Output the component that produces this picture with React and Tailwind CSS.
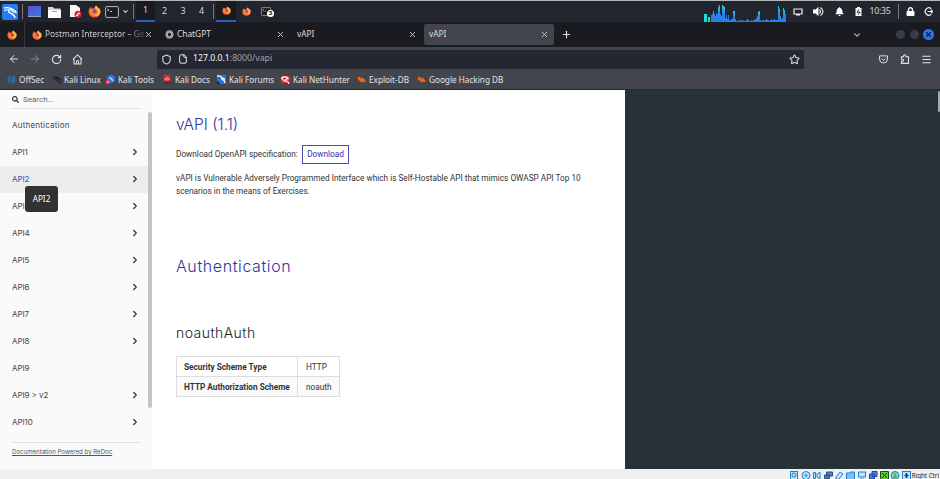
import {
  ArrowLeft,
  ArrowRight,
  RotateCw,
  ChevronDown,
  ChevronRight,
  Plus,
  Shield,
  File,
  Star,
  Menu,
  X,
} from "lucide-react";
import { FaLock, FaBell, FaSearch } from "react-icons/fa";

const tabs = [
  { title: "Postman Interceptor – Ge", icon: "firefox" },
  { title: "ChatGPT", icon: "gpt" },
  { title: "vAPI" },
  { title: "vAPI", active: true },
];

const bookmarks = [
  { name: "OffSec", icon: "offsec", width: "w-[45px]" },
  { name: "Kali Linux", icon: "dragon", width: "w-[54px]" },
  { name: "Kali Tools", icon: "tools", width: "w-[57px]" },
  { name: "Kali Docs", icon: "docs", width: "w-[54px]" },
  { name: "Kali Forums", icon: "forums", width: "w-[64px]" },
  { name: "Kali NetHunter", icon: "nethunter", width: "w-[76px]" },
  { name: "Exploit-DB", icon: "bug", width: "w-[60px]" },
  { name: "Google Hacking DB", icon: "bug", width: "w-[90px]" },
];

const menuItems = [
  { name: "Authentication" },
  { name: "API1", arrow: true },
  { name: "API2", arrow: true, active: true },
  { name: "API3", arrow: true },
  { name: "API4", arrow: true },
  { name: "API5", arrow: true },
  { name: "API6", arrow: true },
  { name: "API7", arrow: true },
  { name: "API8", arrow: true },
  { name: "API9" },
  { name: "API9 > v2", arrow: true },
  { name: "API10", arrow: true },
];

// cpu graph samples, in pixels
const cpu = [
  7, 8, 11, 8, 6, 9, 8, 15, 17, 8, 6, 17, 16, 15, 4, 7, 3, 7, 2, 2, 3, 3, 11, 11, 3, 1,
  1, 2, 1, 2, 2, 1, 2, 1, 1, 2, 3, 2, 1, 1, 2, 1, 2, 2, 3, 4, 6, 10, 11, 2, 1,
  2, 2, 1, 2, 3, 2, 2, 1, 2, 3, 2, 2, 3, 2, 2, 2, 16, 13, 6, 3, 4, 14, 12, 8,
];

const Firefox = ({ className }) => (
  <svg viewBox="0 0 24 24" className={className}>
    <path
      fill="#ff5a2c"
      d="M22.5 9c-.6-1.500-1.800-3-2.700-3.500.8 1.500 1 2.500 1.100 3.200C19.500 5 16.800 4 15 1c-2 1.200-2.800 3.500-2.800 4.800-1.200 0-2.400.4-3.300 1.100C8.700 6 8.800 5 9 4 7.600 4.600 6.500 5.600 5.800 6.500 5.200 6 5.100 4 5.200 3.200 3 4.600 1 8.500 1 12.500a11 10.800 0 0 0 22 0c0-1.200-.1-2.500-.5-3.500z"
    />
    <path fill="#ffbd2e" d="M15 1c-1.800 1.500-2.500 3.500-2.300 5.500 2 1 4.500 3 4.500 6.500 0 4-4 6.500-7.500 5 5 4.500 12 2 13-4.500.2-2 0-3.300-.2-4.500-.6-1.500-1.800-3-2.700-3.500.8 1.500 1 2.500 1.100 3.200C19.500 5 16.800 4 15 1z" />
    <circle cx="11.300" cy="12.500" r="4.600" fill="#8446d9" />
    <path fill="#ff9123" d="M4.500 8.500C7 8 10 8.500 12 10.200c-2.500-.3-2.800 1.300-4.500 1.300.5 4 4.500 5 8 2.800-.8 5-8 6.200-11 1.200-1.200-2-1-5 0-7z" />
  </svg>
);

const Dragon = ({ className }) => (
  <svg viewBox="0 0 16 16" className={className} fill="none" stroke="currentColor">
    <path strokeWidth="1.600" d="M1 3.500c4-1 7-.5 9.500 1.500C7.500 5 6 6.200 6.500 7.800 7.200 9.800 12 8.500 14 14.500" />
    <path strokeWidth="1.300" d="M1.500 6.500c2.500-1.200 4-1.300 6-.8M9.500 3.500l1 1.500 3.500 1.800 1 1.700-3-.5-2.500-2" />
  </svg>
);

const Gpt = ({ className }) => (
  <svg viewBox="0 0 16 16" className={className} fill="none" stroke="#b9bac0" strokeWidth="1.700">
    <ellipse cx="8" cy="8" rx="7" ry="3.800" />
    <ellipse cx="8" cy="8" rx="7" ry="3.800" transform="rotate(60 8 8)" />
    <ellipse cx="8" cy="8" rx="7" ry="3.800" transform="rotate(120 8 8)" />
  </svg>
);

const Terminal = ({ className }) => (
  <svg viewBox="0 0 14 12" className={className}>
    <rect x=".6" y=".6" width="12.800" height="10.800" rx="1" fill="#1b1c20" stroke="#b9b9b9" />
    <path d="M2.500 3l1.500 1-1.500 1M5 5.500h2" stroke="#fff" strokeWidth=".8" fill="none" />
  </svg>
);

const BookmarkIcon = ({ icon }) => {
  if (icon === "dragon") return <Dragon className="size-[10px] text-[#15161a]" />;
  return (
    <svg viewBox="0 0 10 10" className="size-[9px]">
      {icon === "offsec" && (
        <>
          <path d="M3.500 1C0 2 0 7.500 3 9V1zM4.300.500v7" fill="#1767c5" stroke="#2865c9" />
          <path d="M6.500 1C10 2 10 7.500 7 9V1zM5.700 2.500v7" fill="#5147ca" stroke="#138da5" />
        </>
      )}
      {icon === "tools" && (
        <>
          <circle cx="5.500" cy="4.500" r="4.500" fill="#2979e8" />
          <path d="M4 2.500l4 4" stroke="#bbdcff" strokeWidth="1.600" />
          <rect x="0" y="5.500" width="4.500" height="4.500" rx="1" fill="#e93b42" />
          <path d="M1 7.700h2.500" stroke="#ffd9d9" />
        </>
      )}
      {icon === "docs" && (
        <>
          <path d="M1 0h7v10H1z" fill="#e5262e" />
          <path d="M1 8h8v1.500H1z" fill="#22242b" />
          <path d="M3.200 3L2 4.300l1.200 1.300M5.800 3L7 4.300 5.800 5.600M5 2.500l-1 3.500" stroke="#fff" strokeWidth=".7" fill="none" />
        </>
      )}
      {icon === "forums" && (
        <>
          <path d="M0 0h10v10H0z" fill="#2174e6" />
          <path d="M0 1c4 0 6 1 5 3 1 2 4 1 4 5M6 3l3 2" stroke="#fff" strokeWidth="1.300" fill="none" />
          <path d="M0 6l4 4H0z" fill="#17243b" />
        </>
      )}
      {icon === "nethunter" && (
        <>
          <path d="M0 1h10v8H0z" fill="#e6202d" />
          <path d="M0 4c3-3 7-2 8 0L5 5c0 2 3 1 4 5M1 4l4 4" stroke="#fff" strokeWidth="1.300" fill="none" />
        </>
      )}
      {icon === "bug" && (
        <path d="M1 2l2 0 1 1 3 .3L9 5.500l.7 2-2 .2-3 .5-2-2-2-.7L1 4z" fill="#f0620f" />
      )}
    </svg>
  );
};

const Sep = ({ className }) => (
  <div className={`flex justify-center ${className}`}>
    <div className="h-[15px] w-px bg-[#77797e]" />
  </div>
);

const Panel = () => (
  <div className="flex h-[21px] shrink-0 items-center bg-[#23252e] text-[8.800px] text-[#d3d4d8]">
    <div className="flex w-5 justify-center">
      <div className="flex size-4 items-center justify-center rounded-[2px] bg-[#247bf3]">
        <Dragon className="size-[14px] text-white" />
      </div>
    </div>
    <Sep className="w-[5px]" />
    <div className="flex w-[19px] justify-center">
      <div className="h-[11px] w-[13px] border-b border-[#9aa0c8] bg-linear-to-br from-[#5a50c8] to-[#3477e8]" />
    </div>
    <div className="flex w-[21px] justify-center">
      <svg viewBox="0 0 13 12" className="h-3 w-[13px]">
        <path d="M0 1h5l1 1.500h6.500V12H0z" fill="#d9d9d9" />
        <path d="M0 4h13v8H0z" fill="#fbfbfb" />
        <path d="M4 5.500h5" stroke="#a4a4a4" />
      </svg>
    </div>
    <div className="flex w-5 justify-center">
      <svg viewBox="0 0 13 13" className="size-[13px]">
        <path d="M1 0h6l4 3v9H1z" fill="#f7f7f7" />
        <circle cx="9" cy="9.300" r="3.500" fill="#df2632" />
        <path d="M7.300 11l3.400-3.400" stroke="#fff" strokeWidth="1.300" />
      </svg>
    </div>
    <div className="flex w-[19px] justify-center">
      <Firefox className="size-[13px]" />
    </div>
    <div className="flex w-4 justify-center">
      <Terminal className="h-3 w-[14px]" />
    </div>
    <div className="flex w-[11px] justify-center">
      <ChevronDown className="size-[7px]" strokeWidth={3.5} />
    </div>
    <Sep className="w-[5px]" />
    <div className="flex h-full w-[19px] items-center justify-center border-b-2 border-[#2861c8] bg-[#191b21] pt-px">1</div>
    <div className="w-[19px] text-center">2</div>
    <div className="w-[18px] text-center">3</div>
    <div className="w-[19px] text-center">4</div>
    <Sep className="w-[5px]" />
    <div className="flex h-full w-5 items-center justify-center border-b-2 border-[#2861c8] bg-[#191b21]">
      <Firefox className="size-[9px]" />
    </div>
    <div className="flex w-5 justify-center">
      <Firefox className="size-[9px]" />
    </div>
    <div className="relative flex w-5 justify-center">
      <Terminal className="h-[9px] w-[10px]" />
      <div className="absolute top-[3px] left-[11px] flex size-[7px] items-center justify-center rounded-full bg-white text-[6px] font-bold text-black">
        3
      </div>
    </div>

    <div className="ml-auto flex h-[18px] w-[83px] items-end self-end">
      <div className="h-2 w-[3px] shrink-0 bg-[#18e0d8]" />
      <div className="mx-px h-[5px] w-[2px] shrink-0 bg-[#18e0d8]" />
      {cpu.map((h, i) => (
        <div
          key={i}
          className={
            h > 9
              ? "w-px bg-linear-to-t from-[#2a80e8] from-50% to-[#1ed8e0]"
              : "w-px bg-[#2a7fe6]"
          }
          style={{ height: h }}
        />
      ))}
    </div>
    <div className="flex w-[21px] justify-center">
      <svg viewBox="0 0 10 8" className="h-2 w-[10px]" fill="none" stroke="#eee" strokeWidth="1.200">
        <path d="M1 1h8v5H1zM3 7h4" />
      </svg>
    </div>
    <div className="flex w-[21px] justify-center">
      <svg viewBox="0 0 11 11" className="size-[11px]">
        <path d="M0 3.500h2.500L5.500.800v9.400l-3-2.700H0z" fill="#fff" />
        <path d="M6.500 3.500q2 2 0 4M7.500 1.500q5 4 0 8" stroke="#e8e8e8" strokeWidth="1.200" fill="none" />
      </svg>
    </div>
    <div className="flex w-5 justify-center">
      <FaBell className="size-[9px] text-white" />
    </div>
    <div className="flex w-[19px] justify-center">
      <svg viewBox="0 0 7 9" className="h-[9px] w-[7px]">
        <path d="M2 0h3v1h1.500v8h-6V1H2z" fill="#f5f5f5" />
        <path d="M4 2.500L2 5.300h3L3.200 7.700" stroke="#23252e" strokeWidth=".9" fill="none" />
      </svg>
    </div>
    <div className="w-[24px] text-center text-[8.800px] tracking-[-0.300px]">10:35</div>
    <Sep className="w-[12px]" />
    <div className="flex w-3 justify-center">
      <FaLock className="size-[9px] text-white" />
    </div>
    <div className="flex w-6 justify-center">
      <svg viewBox="0 0 10 10" className="ml-px size-[9px]" fill="none" stroke="#eee" strokeWidth="1.300">
        <path d="M8 2A4 4 0 1 0 8 8M4 5h5.500M7.500 3l2 2-2 2" />
      </svg>
    </div>
  </div>
);

const TabBar = () => (
  <div className="flex h-[25px] shrink-0 items-center bg-[#1a1b20] text-[8.350px] text-[#dcdde1]">
    <div className="flex h-full w-[25px] items-center justify-center border-r border-[#36373c]">
      <Firefox className="size-[10px]" />
    </div>
    <div className="ml-[3px] flex gap-[2px]">
      {tabs.map((tab, i) => (
        <div
          key={i}
          className={`flex h-[21px] w-[130px] items-center rounded-[2px] pr-[5px] pl-[5px] ${
            tab.active ? "bg-[#43454c]" : ""
          }`}
        >
          {tab.icon === "firefox" && <Firefox className="-ml-px mr-[3px] size-[10px] shrink-0" />}
          {tab.icon === "gpt" && <Gpt className="mr-[3px] size-[9px] shrink-0" />}
          <span
            className={`flex-1 whitespace-nowrap ${
              tab.icon === "firefox"
                ? "bg-linear-to-r from-[#dcdde1] from-82% to-[#44464c] bg-clip-text tracking-[-0.050px] text-transparent"
                : ""
            }`}
          >
            {tab.title}
          </span>
          <X className="size-[9px] shrink-0 text-[#c8c9cd]" strokeWidth={2.500} />
        </div>
      ))}
    </div>
    <Plus className="ml-[7px] size-[11px]" strokeWidth={2.500} />
    <ChevronDown className="mr-[34px] ml-auto size-[10px]" strokeWidth={2.500} />
    <div className="mr-[7px] flex gap-[5px]">
      <div className="size-[9px] rounded-full bg-[#383c49]" />
      <div className="size-[9px] rounded-full bg-[#383c49]" />
      <div className="-mx-px -my-px flex size-[11px] items-center justify-center rounded-full bg-[#2777f8]">
        <X className="size-[7px] text-[#14203a]" strokeWidth={5} />
      </div>
    </div>
  </div>
);

const NavBar = () => (
  <div className="flex h-[24px] shrink-0 items-center bg-[#43454c] text-[#e3e4e8]">
    <ArrowLeft className="ml-[8px] size-[12px]" strokeWidth={2} />
    <ArrowRight className="ml-[9px] size-[12px] text-[#8a8c92]" strokeWidth={2} />
    <RotateCw className="ml-[10px] size-[11px]" strokeWidth={2.400} />
    <svg viewBox="0 0 12 12" className="ml-[10px] size-[11px]" fill="none" stroke="currentColor" strokeWidth="1.100">
      <path d="M1 5.800L6 1l5 4.800M2.200 5v6h7.600V5M4.800 11V8.200a1.200 1.200 0 0 1 2.400 0V11" />
    </svg>
    <div className="ml-[74px] flex h-[19px] w-[647px] items-center rounded-[2px] bg-[#242731]">
      <Shield className="ml-[4px] size-[11px]" strokeWidth={2.200} />
      <File className="ml-[6px] size-[10px]" strokeWidth={2.400} />
      <span className="ml-[5px] text-[8.700px] text-[#a0a2ab]">
        <span className="text-[#f5f5f8]">127.0.0.1</span>:8000/vapi
      </span>
      <Star className="mr-[4px] ml-auto size-[11px]" strokeWidth={2.200} />
    </div>
    <svg viewBox="0 0 10 10" className="ml-[75px] size-[9px]" fill="none" stroke="currentColor" strokeWidth="1.100">
      <path d="M.6 1h8.800v3.500a4.400 4.400 0 0 1-8.800 0zM2.800 3.800L5 6l2.200-2.200" />
    </svg>
    <svg viewBox="0 0 10 10" className="ml-[12px] size-[10px]" fill="none" stroke="currentColor" strokeWidth="1.100">
      <path d="M3.500 2.800V2a1.200 1.200 0 0 1 2.400 0v.8h2.600v6.600H1.500V7.300h1a1 1 0 0 0 0-2.100h-1V2.800z" />
    </svg>
    <Menu className="ml-[11px] size-[11px]" strokeWidth={2.200} />
  </div>
);

const Bookmarks = () => (
  <div className="flex h-[19px] shrink-0 items-center border-b border-[#26272d] bg-[#43454c] pl-[6px] text-[8.200px] text-[#e3e4e8]">
    {bookmarks.map((b) => (
      <div key={b.name} className={`flex items-center whitespace-nowrap ${b.width}`}>
        <div className="mr-[2px] flex w-[11px] shrink-0 justify-center">
          <BookmarkIcon icon={b.icon} />
        </div>
        {b.name}
      </div>
    ))}
  </div>
);

const Sidebar = () => (
  <div className="relative flex w-[152px] shrink-0 flex-col bg-[#fafafa] font-[Inter,sans-serif] text-[8px] text-[#444]">
    <div className="mr-[11px] ml-[12px] flex h-[19px] items-center border-b border-[#e1e1e1] pt-px">
      <FaSearch className="size-[7px] text-[#222]" />
      <span className="ml-[4px] font-[Roboto,sans-serif] text-[8px] text-[#666]">Search...</span>
    </div>
    <div className="mt-[3px]">
      {menuItems.map((item) => (
        <div
          key={item.name}
          className={`flex h-[27px] items-center justify-between pr-[12px] pb-px pl-[12px] ${
            item.active ? "bg-[#ededed] text-[#4a45b5]" : ""
          }`}
        >
          <span className={item.name === "Authentication" ? "tracking-[0.200px]" : "tracking-[-0.080px]"}>
            {item.name}
          </span>
          {item.arrow && <ChevronRight className="size-[10px] text-[#333]" strokeWidth={3} />}
        </div>
      ))}
    </div>
    <div className="mt-[6px] mr-[11px] ml-[12px] border-t border-[#e1e1e1] pt-[4px] text-[6.100px] leading-[10px] text-[#555] underline">
      Documentation Powered by ReDoc
    </div>
    <div className="absolute top-[22px] right-0 h-[296px] w-[4px] rounded-full bg-[#c3c3c3]" />
    <div className="absolute top-[96px] left-[25px] flex h-[26px] w-[33px] items-center justify-center rounded-[3px] bg-[#2b2b2b]/97 font-['Noto_Sans',sans-serif] text-[8.200px] text-white">
      API2
    </div>
  </div>
);

const Main = () => (
  <div className="w-[473px] shrink-0 bg-white pl-6 font-[Roboto,sans-serif] text-[8.250px] text-[#333]">
    <h1 className="mt-[25px] font-[Inter,sans-serif] text-[15.500px] leading-5 font-light text-[#32329f]">
      vAPI (1.1)
    </h1>
    <div className="mt-[10px] flex h-[19px] items-center">
      <span className="w-[126px]">Download OpenAPI specification:</span>
      <span className="flex h-[19px] w-[47px] items-center justify-center border border-[#4a4ab8] text-[#32329f]">
        Download
      </span>
    </div>
    <p className="mt-[8px] leading-[12.500px]">
      vAPI is Vulnerable Adversely Programmed Interface which is Self-Hostable API that mimics OWASP API Top 10
      <br />
      scenarios in the means of Exercises.
    </p>
    <h1 className="mt-[59px] font-[Inter,sans-serif] text-[16px] leading-5 font-light tracking-[0.600px] text-[#32329f]">
      Authentication
    </h1>
    <h2 className="mt-[47px] font-[Inter,sans-serif] text-[14px] leading-5 font-light tracking-[0.450px] text-[#222]">
      noauthAuth
    </h2>
    <table className="mt-[13px] h-[41px] border-collapse text-[8.250px] leading-[12px]">
      <tbody>
        <tr className="h-5">
          <th className="w-[121px] border border-[#ddd] pl-[7px] text-left font-bold">Security Scheme Type</th>
          <td className="w-[42px] border border-[#ddd] pl-[8px]">HTTP</td>
        </tr>
        <tr className="h-5 bg-[#fafafa]">
          <th className="border border-[#ddd] pl-[7px] text-left font-bold">HTTP Authorization Scheme</th>
          <td className="border border-[#ddd] pl-[8px]">noauth</td>
        </tr>
      </tbody>
    </table>
  </div>
);

// host machine strip with the device indicators
const StatusBar = () => (
  <div className="flex h-[10px] shrink-0 items-center justify-end overflow-hidden bg-[#f0f0f0] pt-[2px] pr-px">
    <svg viewBox="0 0 121 9" className="h-[9px] w-[121px]" fill="#b9e5fb" stroke="#2180cf" strokeWidth="1">
      <rect x=".5" y=".5" width="7" height="8" />
      <circle cx="4" cy="4" r="2" />
      <circle cx="16" cy="4.500" r="4" />
      <circle cx="16" cy="4.500" r="1" />
      <path d="M23.500 1.500h2v6h-2zM27 3l3-2v7l-3-2z" />
      <path d="M36.500 1h6v4h-6zM34.500 4h5v3.500h-5z" fill="#4c7fc1" stroke="#294f8c" />
      <path d="M46 6l4-5 3 2-4 5-3 .5z" />
      <path d="M56.500 2h3l1-1h4v7.500h-8z" fill="#6cc4f8" />
      <path d="M68.500 1h7v5h-7zM70 8h4" />
      <path d="M82 .500h5v5h-5zM79.500 3h5v5h-5z" fill="#4d80d8" stroke="#2444a2" />
      <path d="M90.500.500h8v8h-8z" fill="#67c72e" stroke="#214c20" />
      <path d="M92 2l5 5M97 2l-5 5" stroke="#153f20" />
      <circle cx="105" cy="4.500" r="4" fill="#88d9a0" />
      <path d="M105 2v5M103 5l2 2 2-2" stroke="#319d23" />
      <rect x="112.500" y=".500" width="8" height="8" />
      <path d="M116.500 2v5M114.500 4.500h4" stroke="#063b80" strokeWidth="1.500" />
    </svg>
    <span className="ml-px font-['Noto_Sans',sans-serif] text-[6.200px] leading-[9px] whitespace-nowrap text-[#222]">Right Ctrl</span>
  </div>
);

const App = () => {
  return (
    <div className="flex h-[479px] w-[940px] flex-col overflow-hidden border-t border-[#b4b8b8] font-['Noto_Sans',sans-serif]">
      <Panel />
      <TabBar />
      <NavBar />
      <Bookmarks />
      <div className="flex h-[379px] shrink-0">
        <Sidebar />
        <Main />
        <div className="flex flex-1 justify-end bg-[#263238] pt-px">
          <div className="h-[21px] w-[2px] rounded-full bg-[#a4aaad]" />
        </div>
      </div>
      <StatusBar />
    </div>
  );
};

export default App;
